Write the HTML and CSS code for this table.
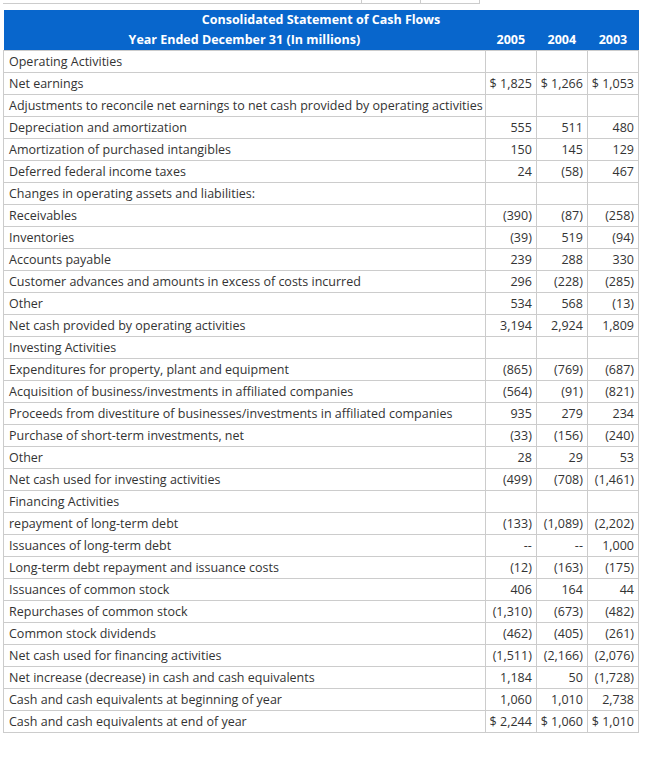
FILE: index.html
```html
<!DOCTYPE html>
<html>
<head>
<meta charset="utf-8">
<link rel="stylesheet" href="styles.css">
</head>
<body>
<div class="page">
  <div class="prev">
    <div class="p1"></div><div class="p2"></div><div class="p3"></div>
  </div>
  <table class="cf">
    <colgroup>
      <col class="c-label"><col class="c-num"><col class="c-num"><col class="c-num">
    </colgroup>
    <thead>
      <tr><th colspan="4" class="title">Consolidated Statement of Cash Flows</th></tr>
      <tr><th class="sub">Year Ended December 31 (In millions)</th><th class="yr">2005</th><th class="yr">2004</th><th class="yr">2003</th></tr>
    </thead>
    <tbody>
      <tr><td>Operating Activities</td><td></td><td></td><td></td></tr>
      <tr><td>Net earnings</td><td>$ 1,825</td><td>$ 1,266</td><td>$ 1,053</td></tr>
      <tr><td>Adjustments to reconcile net earnings to net cash provided by operating activities</td><td></td><td></td><td></td></tr>
      <tr><td>Depreciation and amortization</td><td>555</td><td>511</td><td>480</td></tr>
      <tr><td>Amortization of purchased intangibles</td><td>150</td><td>145</td><td>129</td></tr>
      <tr><td>Deferred federal income taxes</td><td>24</td><td>(58)</td><td>467</td></tr>
      <tr><td>Changes in operating assets and liabilities:</td><td></td><td></td><td></td></tr>
      <tr><td>Receivables</td><td>(390)</td><td>(87)</td><td>(258)</td></tr>
      <tr><td>Inventories</td><td>(39)</td><td>519</td><td>(94)</td></tr>
      <tr><td>Accounts payable</td><td>239</td><td>288</td><td>330</td></tr>
      <tr><td>Customer advances and amounts in excess of costs incurred</td><td>296</td><td>(228)</td><td>(285)</td></tr>
      <tr><td>Other</td><td>534</td><td>568</td><td>(13)</td></tr>
      <tr class="total"><td>Net cash provided by operating activities</td><td>3,194</td><td>2,924</td><td>1,809</td></tr>
      <tr><td>Investing Activities</td><td></td><td></td><td></td></tr>
      <tr><td>Expenditures for property, plant and equipment</td><td>(865)</td><td>(769)</td><td>(687)</td></tr>
      <tr><td>Acquisition of business/investments in affiliated companies</td><td>(564)</td><td>(91)</td><td>(821)</td></tr>
      <tr><td>Proceeds from divestiture of businesses/investments in affiliated companies</td><td>935</td><td>279</td><td>234</td></tr>
      <tr><td>Purchase of short-term investments, net</td><td>(33)</td><td>(156)</td><td>(240)</td></tr>
      <tr><td>Other</td><td>28</td><td>29</td><td>53</td></tr>
      <tr class="total"><td>Net cash used for investing activities</td><td>(499)</td><td>(708)</td><td>(1,461)</td></tr>
      <tr><td>Financing Activities</td><td></td><td></td><td></td></tr>
      <tr><td>repayment of long-term debt</td><td>(133)</td><td>(1,089)</td><td>(2,202)</td></tr>
      <tr><td>Issuances of long-term debt</td><td>--</td><td>--</td><td>1,000</td></tr>
      <tr><td>Long-term debt repayment and issuance costs</td><td>(12)</td><td>(163)</td><td>(175)</td></tr>
      <tr><td>Issuances of common stock</td><td>406</td><td>164</td><td>44</td></tr>
      <tr><td>Repurchases of common stock</td><td>(1,310)</td><td>(673)</td><td>(482)</td></tr>
      <tr><td>Common stock dividends</td><td>(462)</td><td>(405)</td><td>(261)</td></tr>
      <tr class="total"><td>Net cash used for financing activities</td><td>(1,511)</td><td>(2,166)</td><td>(2,076)</td></tr>
      <tr><td>Net increase (decrease) in cash and cash equivalents</td><td>1,184</td><td>50</td><td>(1,728)</td></tr>
      <tr><td>Cash and cash equivalents at beginning of year</td><td>1,060</td><td>1,010</td><td>2,738</td></tr>
      <tr class="total"><td>Cash and cash equivalents at end of year</td><td>$ 2,244</td><td>$ 1,060</td><td>$ 1,010</td></tr>
    </tbody>
  </table>
</div>
</body>
</html>
```
FILE: styles.css
```css
html, body {
  margin: 0;
  padding: 0;
  background: #fff;
}
.page {
  padding: 0 0 0 3px;
  font-family: "Open Sans", "Liberation Sans", sans-serif;
  color: #333;
}
.prev {
  display: flex;
  height: 3px;
  border-bottom: 1px solid #ccc;
  width: 477px;
}
.prev .p1 { width: 359px; border-right: 1px solid #ccc; }
.prev .p2 { width: 58px; border-right: 1px solid #ccc; }
.prev .p3 { width: 58px; border-right: 1px solid #ccc; }
.cf {
  border-collapse: collapse;
  margin-top: 6px;
  width: 636px;
  font-size: 12.5px;
  table-layout: fixed;
}
.c-label { width: 481px; }
.c-num { width: 51px; }
.cf th {
  background: #0866cc;
  color: #fff;
  font-weight: 700;
  font-size: 12.5px;
  padding: 0;
  height: 20px;
  line-height: 20px;
  white-space: nowrap;
}
.cf th.title { text-align: center; }
.cf th.sub { text-align: center; }
.cf th.yr { text-align: center; }
.cf td {
  border: 1px solid #ccc;
  height: 21px;
  padding: 0 2px 0 5px;
  line-height: 14px;
  white-space: nowrap;
  overflow: hidden;
}
.cf td + td {
  text-align: right;
  padding: 0 4px 0 0;
}
.cf tr.total td + td {
  border-top: 1px solid #000;
}
```
